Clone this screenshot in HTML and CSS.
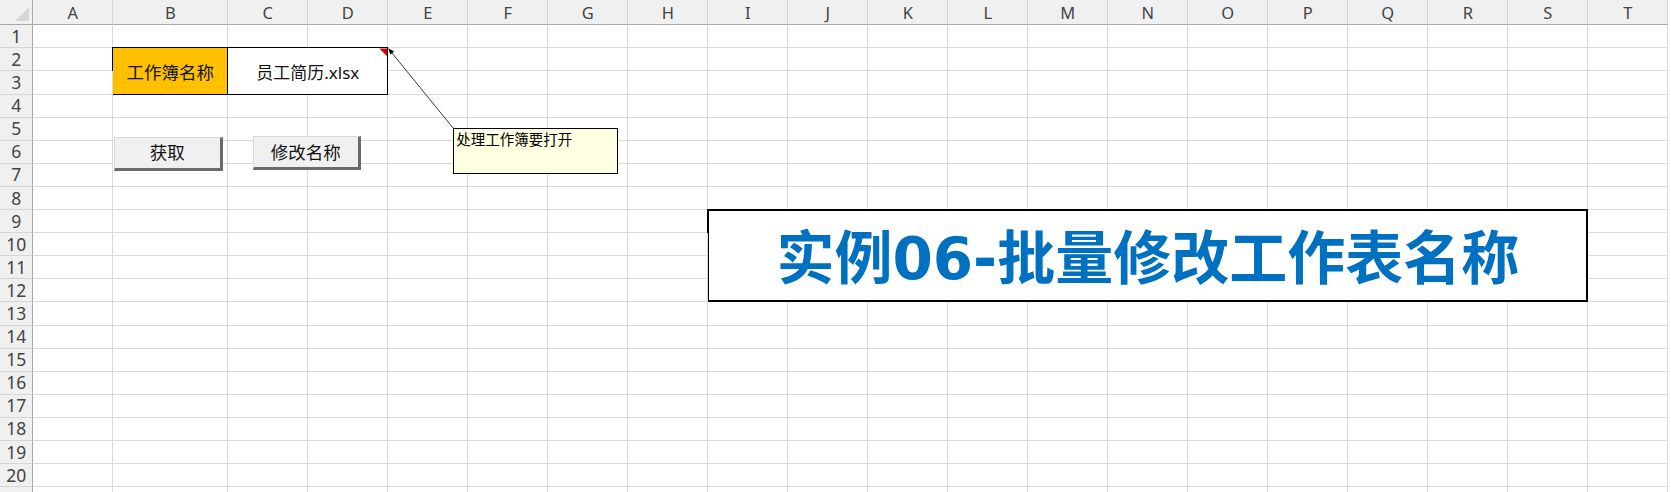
FILE: index.html
```html
<!DOCTYPE html>
<html lang="zh-CN">
<head>
<meta charset="utf-8">
<title>实例06-批量修改工作表名称</title>
<link rel="stylesheet" href="styles.css">
</head>
<body>
<div class="sheet">
  <div class="corner"></div>
  <div class="ch">A</div><div class="ch">B</div><div class="ch">C</div><div class="ch">D</div><div class="ch">E</div><div class="ch">F</div><div class="ch">G</div><div class="ch">H</div><div class="ch">I</div><div class="ch">J</div><div class="ch">K</div><div class="ch">L</div><div class="ch">M</div><div class="ch">N</div><div class="ch">O</div><div class="ch">P</div><div class="ch">Q</div><div class="ch">R</div><div class="ch">S</div><div class="ch">T</div>

  <div class="rh">1</div><div class="c"></div><div class="c"></div><div class="c"></div><div class="c"></div><div class="c"></div><div class="c"></div><div class="c"></div><div class="c"></div><div class="c"></div><div class="c"></div><div class="c"></div><div class="c"></div><div class="c"></div><div class="c"></div><div class="c"></div><div class="c"></div><div class="c"></div><div class="c"></div><div class="c"></div><div class="c"></div>

  <div class="rh">2</div><div class="c"></div><div class="label">工作簿名称</div><div class="value">员工简历.xlsx</div><div class="c"></div><div class="c"></div><div class="c"></div><div class="c"></div><div class="c"></div><div class="c"></div><div class="c"></div><div class="c"></div><div class="c"></div><div class="c"></div><div class="c"></div><div class="c"></div><div class="c"></div><div class="c"></div><div class="c"></div><div class="c"></div>

  <div class="rh">3</div><div class="c"></div><div class="c"></div><div class="c"></div><div class="c"></div><div class="c"></div><div class="c"></div><div class="c"></div><div class="c"></div><div class="c"></div><div class="c"></div><div class="c"></div><div class="c"></div><div class="c"></div><div class="c"></div><div class="c"></div><div class="c"></div><div class="c"></div>

  <div class="rh">4</div><div class="c"></div><div class="c"></div><div class="c"></div><div class="c"></div><div class="c"></div><div class="c"></div><div class="c"></div><div class="c"></div><div class="c"></div><div class="c"></div><div class="c"></div><div class="c"></div><div class="c"></div><div class="c"></div><div class="c"></div><div class="c"></div><div class="c"></div><div class="c"></div><div class="c"></div><div class="c"></div>

  <div class="rh">5</div><div class="c"></div><div class="c"></div><div class="c"></div><div class="c"></div><div class="c"></div><div class="c"></div><div class="c"></div><div class="c"></div><div class="c"></div><div class="c"></div><div class="c"></div><div class="c"></div><div class="c"></div><div class="c"></div><div class="c"></div><div class="c"></div><div class="c"></div><div class="c"></div><div class="c"></div><div class="c"></div>

  <div class="rh">6</div><div class="c"></div><div class="c"></div><div class="c"></div><div class="c"></div><div class="c"></div><div class="c"></div><div class="c"></div><div class="c"></div><div class="c"></div><div class="c"></div><div class="c"></div><div class="c"></div><div class="c"></div><div class="c"></div><div class="c"></div><div class="c"></div><div class="c"></div><div class="c"></div><div class="c"></div><div class="c"></div>

  <div class="rh">7</div><div class="c"></div><div class="c"></div><div class="c"></div><div class="c"></div><div class="c"></div><div class="c"></div><div class="c"></div><div class="c"></div><div class="c"></div><div class="c"></div><div class="c"></div><div class="c"></div><div class="c"></div><div class="c"></div><div class="c"></div><div class="c"></div><div class="c"></div><div class="c"></div><div class="c"></div><div class="c"></div>

  <div class="rh">8</div><div class="c"></div><div class="c"></div><div class="c"></div><div class="c"></div><div class="c"></div><div class="c"></div><div class="c"></div><div class="c"></div><div class="c"></div><div class="c"></div><div class="c"></div><div class="c"></div><div class="c"></div><div class="c"></div><div class="c"></div><div class="c"></div><div class="c"></div><div class="c"></div><div class="c"></div><div class="c"></div>

  <div class="rh">9</div><div class="c"></div><div class="c"></div><div class="c"></div><div class="c"></div><div class="c"></div><div class="c"></div><div class="c"></div><div class="c"></div><div class="title">实例06-批量修改工作表名称</div><div class="c"></div>

  <div class="rh">10</div><div class="c"></div><div class="c"></div><div class="c"></div><div class="c"></div><div class="c"></div><div class="c"></div><div class="c"></div><div class="c"></div><div class="c"></div>

  <div class="rh">11</div><div class="c"></div><div class="c"></div><div class="c"></div><div class="c"></div><div class="c"></div><div class="c"></div><div class="c"></div><div class="c"></div><div class="c"></div>

  <div class="rh">12</div><div class="c"></div><div class="c"></div><div class="c"></div><div class="c"></div><div class="c"></div><div class="c"></div><div class="c"></div><div class="c"></div><div class="c"></div>

  <div class="rh">13</div><div class="c"></div><div class="c"></div><div class="c"></div><div class="c"></div><div class="c"></div><div class="c"></div><div class="c"></div><div class="c"></div><div class="c"></div><div class="c"></div><div class="c"></div><div class="c"></div><div class="c"></div><div class="c"></div><div class="c"></div><div class="c"></div><div class="c"></div><div class="c"></div><div class="c"></div><div class="c"></div>

  <div class="rh">14</div><div class="c"></div><div class="c"></div><div class="c"></div><div class="c"></div><div class="c"></div><div class="c"></div><div class="c"></div><div class="c"></div><div class="c"></div><div class="c"></div><div class="c"></div><div class="c"></div><div class="c"></div><div class="c"></div><div class="c"></div><div class="c"></div><div class="c"></div><div class="c"></div><div class="c"></div><div class="c"></div>

  <div class="rh">15</div><div class="c"></div><div class="c"></div><div class="c"></div><div class="c"></div><div class="c"></div><div class="c"></div><div class="c"></div><div class="c"></div><div class="c"></div><div class="c"></div><div class="c"></div><div class="c"></div><div class="c"></div><div class="c"></div><div class="c"></div><div class="c"></div><div class="c"></div><div class="c"></div><div class="c"></div><div class="c"></div>

  <div class="rh">16</div><div class="c"></div><div class="c"></div><div class="c"></div><div class="c"></div><div class="c"></div><div class="c"></div><div class="c"></div><div class="c"></div><div class="c"></div><div class="c"></div><div class="c"></div><div class="c"></div><div class="c"></div><div class="c"></div><div class="c"></div><div class="c"></div><div class="c"></div><div class="c"></div><div class="c"></div><div class="c"></div>

  <div class="rh">17</div><div class="c"></div><div class="c"></div><div class="c"></div><div class="c"></div><div class="c"></div><div class="c"></div><div class="c"></div><div class="c"></div><div class="c"></div><div class="c"></div><div class="c"></div><div class="c"></div><div class="c"></div><div class="c"></div><div class="c"></div><div class="c"></div><div class="c"></div><div class="c"></div><div class="c"></div><div class="c"></div>

  <div class="rh">18</div><div class="c"></div><div class="c"></div><div class="c"></div><div class="c"></div><div class="c"></div><div class="c"></div><div class="c"></div><div class="c"></div><div class="c"></div><div class="c"></div><div class="c"></div><div class="c"></div><div class="c"></div><div class="c"></div><div class="c"></div><div class="c"></div><div class="c"></div><div class="c"></div><div class="c"></div><div class="c"></div>

  <div class="rh">19</div><div class="c"></div><div class="c"></div><div class="c"></div><div class="c"></div><div class="c"></div><div class="c"></div><div class="c"></div><div class="c"></div><div class="c"></div><div class="c"></div><div class="c"></div><div class="c"></div><div class="c"></div><div class="c"></div><div class="c"></div><div class="c"></div><div class="c"></div><div class="c"></div><div class="c"></div><div class="c"></div>

  <div class="rh">20</div><div class="c"></div><div class="c"></div><div class="c"></div><div class="c"></div><div class="c"></div><div class="c"></div><div class="c"></div><div class="c"></div><div class="c"></div><div class="c"></div><div class="c"></div><div class="c"></div><div class="c"></div><div class="c"></div><div class="c"></div><div class="c"></div><div class="c"></div><div class="c"></div><div class="c"></div><div class="c"></div>

  <div class="rh"></div><div class="c"></div><div class="c"></div><div class="c"></div><div class="c"></div><div class="c"></div><div class="c"></div><div class="c"></div><div class="c"></div><div class="c"></div><div class="c"></div><div class="c"></div><div class="c"></div><div class="c"></div><div class="c"></div><div class="c"></div><div class="c"></div><div class="c"></div><div class="c"></div><div class="c"></div><div class="c"></div>

  <div class="btn btn-get">获取</div>
  <div class="btn btn-rename">修改名称</div>

  <svg class="callout" width="80" height="90" viewBox="0 0 80 90" aria-hidden="true">
    <line x1="12" y1="9" x2="73.3" y2="84.3" stroke="#3a3a3a" stroke-width="1"/>
    <polygon points="8.3,4.3 10.2,10.6 14.2,7.4" fill="#000"/>
  </svg>
  <div class="note">处理工作簿要打开</div>
</div>
</body>
</html>
```

FILE: styles.css
```css
html, body {
  margin: 0;
  padding: 0;
  background: #ffffff;
  overflow: hidden;
}

body {
  width: 1671px;
  height: 492px;
  font-family: "Noto Sans", "Noto Sans CJK SC", sans-serif;
  color: #000;
}

.sheet {
  position: relative;
  display: grid;
  grid-template-columns: 33.3px 80px 115px repeat(18, 80px);
  grid-template-rows: 25.3px repeat(21, 23.1px);
}

.sheet > div {
  box-sizing: border-box;
  min-width: 0;
  min-height: 0;
}

.corner {
  position: relative;
  background: #f0f0f0;
  border-right: 1px solid #ababab;
  border-bottom: 1px solid #ababab;
}

.corner::after {
  content: "";
  position: absolute;
  right: 3px;
  bottom: 3px;
  width: 14px;
  height: 14px;
  background: #d6d6d6;
  clip-path: polygon(100% 0, 100% 100%, 0 100%);
}

.ch {
  background: #f0f0f0;
  border-right: 1px solid #d6d6d6;
  border-bottom: 1px solid #ababab;
  color: #444;
  font-size: 16.5px;
  line-height: 1;
  display: flex;
  align-items: flex-end;
  justify-content: center;
  padding-bottom: 3px;
}

.rh {
  background: #f0f0f0;
  border-right: 1px solid #a8a8a8;
  border-bottom: 1px solid #d6d6d6;
  color: #444;
  font-size: 17.5px;
  line-height: 1;
  display: flex;
  align-items: flex-end;
  justify-content: center;
  padding-bottom: 2px;
}

.c {
  border-right: 1px solid #dadada;
  border-bottom: 1px solid #dadada;
}

.label,
.value {
  grid-row: span 2;
  margin: -1px 0 0 -1px;
  border: 1px solid #000;
  display: flex;
  align-items: center;
  justify-content: center;
  font-size: 17.5px;
  font-family: "Noto Sans", "Noto Sans CJK SC", sans-serif;
  color: #111;
  padding-top: 1px;
}

.label {
  background: #ffc000;
}

.value {
  grid-column: span 2;
  background: #fff;
  position: relative;
  font-size: 17px;
  border-left: none;
  margin-left: 0;
}

.value::after {
  content: "";
  position: absolute;
  top: 0;
  right: 0;
  width: 8px;
  height: 8px;
  background: #e00000;
  clip-path: polygon(0 0, 100% 0, 100% 100%);
}

.title {
  grid-column: span 11;
  grid-row: span 4;
  margin: -1px 0 0 -1px;
  border: 2px solid #000;
  background: #fff;
  display: flex;
  align-items: center;
  justify-content: center;
  padding-top: 7px;
  color: #0070c0;
  font-family: "DejaVu Sans", "Noto Sans CJK SC", sans-serif;
  font-weight: 700;
  font-size: 58px;
  line-height: 1;
  white-space: nowrap;
}

.btn {
  position: absolute;
  box-sizing: border-box;
  background: #f0f0f0;
  border-top: 1px solid #d9d9d9;
  border-left: 1px solid #d9d9d9;
  border-right: 3px solid #6a6a6a;
  border-bottom: 3px solid #6a6a6a;
  display: flex;
  align-items: center;
  justify-content: center;
  font-family: "Noto Sans CJK SC", sans-serif;
  font-size: 17.5px;
  line-height: 1;
  color: #111;
  padding-bottom: 1px;
}

.btn-get {
  left: 114px;
  top: 136.5px;
  width: 108.7px;
  height: 34px;
}

.btn-rename {
  left: 252.7px;
  top: 136px;
  width: 108.3px;
  height: 34.3px;
}

.callout {
  position: absolute;
  left: 380px;
  top: 44px;
  overflow: visible;
}

.note {
  position: absolute;
  left: 453.3px;
  top: 128.3px;
  width: 165px;
  height: 46px;
  box-sizing: border-box;
  background: #ffffe1;
  border: 1px solid #000;
  padding: 2px 2px;
  font-family: "Noto Sans CJK SC", sans-serif;
  font-size: 14.5px;
  line-height: 1.1;
  color: #000;
}
```
